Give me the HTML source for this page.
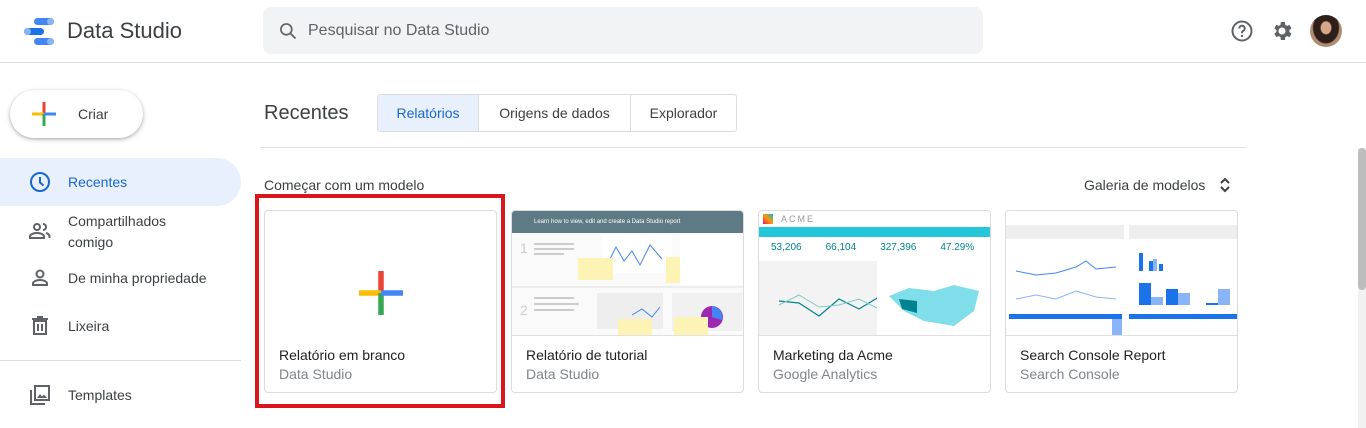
<!DOCTYPE html>
<html><head><meta charset="utf-8"><style>
*{box-sizing:border-box;margin:0;padding:0}
body{width:1366px;height:428px;overflow:hidden;background:#fff;font-family:"Liberation Sans",sans-serif;color:#3c4043;position:relative}
.abs{position:absolute}
.card{position:absolute;top:210px;width:233px;height:183px;border:1px solid #dadce0;border-radius:4px;overflow:hidden;background:#fff}
.card .th{height:125px;border-bottom:1px solid #e0e0e0;position:relative;overflow:hidden}
.card .t{position:absolute;left:14px;top:136px;font-size:14px;color:#202124}
.card .s{position:absolute;left:14px;top:155px;font-size:14px;color:#80868b}
.nav{position:absolute;left:0;width:241px;height:48px;font-size:14px;color:#3c4043}
.nav span{position:absolute;left:68px}
.nav svg{position:absolute;left:28px}
</style></head><body>
<svg class="abs" style="left:24px;top:18px" width="30" height="28" viewBox="0 0 30 28">
<rect x="10" y="0" width="20" height="7" rx="3.5" fill="#4285f4"/>
<rect x="0" y="10" width="20" height="7" rx="3.5" fill="#1a73e8"/>
<rect x="10" y="20" width="20" height="7" rx="3.5" fill="#4285f4"/>
<circle cx="26.5" cy="3.5" r="3.5" fill="#8ab4f8"/><circle cx="3.5" cy="13.5" r="3.5" fill="#8ab4f8"/><circle cx="26.5" cy="23.5" r="3.5" fill="#8ab4f8"/>
</svg>
<div class="abs" style="left:67px;top:18px;font-size:22px;color:#3c4043">Data Studio</div>
<div class="abs" style="left:263px;top:7px;width:720px;height:47px;background:#f1f3f4;border-radius:8px"></div>
<svg class="abs" style="left:278px;top:21px" width="20" height="20" viewBox="0 0 24 24"><circle cx="10" cy="10" r="6.5" fill="none" stroke="#5f6368" stroke-width="2"/><path d="M15 15l6 6" stroke="#5f6368" stroke-width="2.2"/></svg>
<div class="abs" style="left:308px;top:22px;font-size:16px;color:#5f6368">Pesquisar no Data Studio</div>
<svg class="abs" style="left:1230px;top:19px" width="24" height="24" viewBox="0 0 24 24"><circle cx="12" cy="12" r="9.5" fill="none" stroke="#5f6368" stroke-width="2"/><path d="M9.3 9.5a2.7 2.7 0 1 1 3.8 2.4c-.8.4-1.1.9-1.1 1.8v.5" fill="none" stroke="#5f6368" stroke-width="2"/><circle cx="12" cy="17" r="1.2" fill="#5f6368"/></svg>
<svg class="abs" style="left:1270px;top:19px" width="24" height="24" viewBox="0 0 24 24"><path fill="#5f6368" d="M19.4 13a7.5 7.5 0 0 0 0-2l2.1-1.6-2-3.5-2.5 1a7 7 0 0 0-1.7-1L14.9 3h-4l-.4 2.9a7 7 0 0 0-1.7 1l-2.5-1-2 3.5L6.4 11a7.5 7.5 0 0 0 0 2l-2.1 1.6 2 3.5 2.5-1a7 7 0 0 0 1.7 1l.4 2.9h4l.4-2.9a7 7 0 0 0 1.7-1l2.5 1 2-3.5zM12 15.5a3.5 3.5 0 1 1 0-7 3.5 3.5 0 0 1 0 7z"/></svg>
<div class="abs" style="left:1310px;top:15px;width:32px;height:32px;border-radius:50%;background:radial-gradient(ellipse at 50% 40%,#d8a78a 0 22%,#2e1f1a 26% 55%,#b08c74 60%)"></div>
<div class="abs" style="left:0;top:62px;width:1366px;height:1px;background:#dadce0"></div>
<div class="abs" style="left:10px;top:90px;width:133px;height:48px;border-radius:24px;background:#fff;box-shadow:0 1px 3px rgba(60,64,67,.35),0 2px 6px rgba(60,64,67,.15)"></div>
<svg class="abs" style="left:32px;top:102px" width="24" height="24" viewBox="0 0 24 24"><rect x="10.5" y="0" width="3" height="12" fill="#ea4335"/><rect x="0" y="10.5" width="12" height="3" fill="#fbbc04"/><rect x="10.5" y="12" width="3" height="12" fill="#34a853"/><rect x="12" y="10.5" width="12" height="3" fill="#4285f4"/></svg>
<div class="abs" style="left:78px;top:106px;font-size:14px;color:#3c4043">Criar</div>
<div class="nav" style="top:158px;background:#e8f0fe;border-radius:0 24px 24px 0;color:#1967d2"><svg style="top:12px" width="24" height="24" viewBox="0 0 24 24"><circle cx="12" cy="12" r="9" fill="none" stroke="#1967d2" stroke-width="2"/><path d="M12 7v5.5l3.5 3" fill="none" stroke="#1967d2" stroke-width="2"/></svg><span style="top:16px">Recentes</span></div>
<div class="nav" style="top:207px"><svg style="top:12px" width="24" height="24" viewBox="0 0 24 24"><circle cx="9" cy="8" r="3" fill="none" stroke="#5f6368" stroke-width="2"/><path d="M2 19v-1.5c0-2 3-3.5 7-3.5s7 1.5 7 3.5V19z" fill="none" stroke="#5f6368" stroke-width="2"/><path d="M15 5a3 3 0 0 1 0 6M18 14c2 .6 3.5 1.7 3.5 3.5V19" fill="none" stroke="#5f6368" stroke-width="2"/></svg><span style="top:4px;line-height:21px">Compartilhados<br>comigo</span></div>
<div class="nav" style="top:254px"><svg style="top:12px" width="24" height="24" viewBox="0 0 24 24"><circle cx="12" cy="8" r="3.5" fill="none" stroke="#5f6368" stroke-width="2"/><path d="M5 19v-1.5c0-2 3.5-3.5 7-3.5s7 1.5 7 3.5V19z" fill="none" stroke="#5f6368" stroke-width="2"/></svg><span style="top:16px">De minha propriedade</span></div>
<div class="nav" style="top:302px"><svg style="top:12px" width="24" height="24" viewBox="0 0 24 24"><path d="M6 7h12v13H6zM4 5h16M9 3h6M10 10v7M14 10v7" fill="none" stroke="#5f6368" stroke-width="2"/></svg><span style="top:16px">Lixeira</span></div>
<div class="abs" style="left:0;top:360px;width:241px;height:1px;background:#dadce0"></div>
<div class="nav" style="top:371px"><svg style="top:12px" width="24" height="24" viewBox="0 0 24 24"><path d="M7 3h14v14H7z" fill="none" stroke="#5f6368" stroke-width="2"/><path d="M3 7v14h14" fill="none" stroke="#5f6368" stroke-width="2"/><path d="M9 15l3-4 2 2.5 2-2 3 3.5z" fill="#5f6368"/></svg><span style="top:16px">Templates</span></div>
<div class="abs" style="left:264px;top:102px;font-size:20px;color:#3c4043">Recentes</div>
<div class="abs" style="left:377px;top:94px;width:360px;height:38px;border:1px solid #dadce0;border-radius:3px;display:flex;font-size:14px">
<div style="width:101px;background:#e8f0fe;color:#1967d2;border-right:1px solid #dadce0;text-align:center;line-height:36px">Relatórios</div>
<div style="width:152px;border-right:1px solid #dadce0;text-align:center;line-height:36px">Origens de dados</div>
<div style="flex:1;text-align:center;line-height:36px">Explorador</div></div>
<div class="abs" style="left:260px;top:147px;width:986px;height:1px;background:#e0e0e0"></div>
<div class="abs" style="left:264px;top:177px;font-size:14px;color:#3c4043">Começar com um modelo</div>
<div class="abs" style="left:1084px;top:177px;font-size:14px;color:#3c4043">Galeria de modelos</div>
<svg class="abs" style="left:1219px;top:177px" width="12" height="16" viewBox="0 0 12 16"><path d="M2 6l4-4 4 4M2 10l4 4 4-4" fill="none" stroke="#3c4043" stroke-width="2"/></svg>
<div class="card" style="left:264px"><div class="th" style="border-bottom:none"><svg style="position:absolute;left:94px;top:60px" width="44" height="44" viewBox="0 0 24 24"><rect x="10.5" y="0" width="3" height="12" fill="#ea4335"/><rect x="0" y="10.5" width="12" height="3" fill="#fbbc04"/><rect x="10.5" y="12" width="3" height="12" fill="#34a853"/><rect x="12" y="10.5" width="12" height="3" fill="#4285f4"/></svg></div><div class="t">Relatório em branco</div><div class="s">Data Studio</div></div>
<div class="card" style="left:511px"><div class="th" style="background:#fafafa">
<div style="position:absolute;left:0;top:0;width:233px;height:22px;background:#5e7a84;color:#fff;font-size:6px;padding:8px 0 0 22px">Learn how to view, edit and create a Data Studio report</div>
<svg style="position:absolute;left:0;top:22px" width="233" height="103"><text x="8" y="20" font-size="14" fill="#ccc">1</text><text x="8" y="82" font-size="14" fill="#ccc">2</text>
<rect x="90" y="2" width="70" height="38" fill="#fff"/><polyline points="96,30 104,14 112,28 120,18 128,32 138,12 150,26" fill="none" stroke="#4285f4"/><rect x="66" y="25" width="35" height="22" fill="#fdf3b5"/><rect x="154" y="24" width="35" height="26" fill="#fdf3b5"/><rect x="168" y="2" width="62" height="50" fill="#fff"/><line x1="0" y1="54" x2="233" y2="54" stroke="#e0e0e0"/><rect x="85" y="60" width="66" height="36" fill="#eee"/><polyline points="120,82 130,76 140,84 148,74" fill="none" stroke="#4285f4"/><rect x="160" y="60" width="70" height="38" fill="#f1f1f1"/><circle cx="200" cy="84" r="11" fill="#9c27b0"/><path d="M200 84V73a11 11 0 0 1 10 14z" fill="#4285f4"/><rect x="106" y="86" width="34" height="17" fill="#fdf3b5"/><rect x="162" y="84" width="34" height="19" fill="#fdf3b5"/>
<g fill="#ccc"><rect x="22" y="10" width="40" height="2"/><rect x="22" y="15" width="40" height="2"/><rect x="22" y="20" width="30" height="2"/><rect x="22" y="64" width="40" height="2"/><rect x="22" y="70" width="45" height="2"/><rect x="22" y="76" width="40" height="2"/></g></svg></div><div class="t">Relatório de tutorial</div><div class="s">Data Studio</div></div>
<div class="card" style="left:758px"><div class="th" style="background:#f3f3f3">
<div style="position:absolute;left:0;top:0;width:233px;height:16px;background:#fff;font-size:9px;color:#999;padding:3px 0 0 22px;letter-spacing:2px">ACME</div>
<div style="position:absolute;left:4px;top:3px;width:10px;height:10px;background:linear-gradient(45deg,#e91e63,#ff9800,#00bcd4)"></div>
<div style="position:absolute;left:0;top:16px;width:233px;height:10px;background:#26c6da"></div>
<div style="position:absolute;left:0;top:26px;width:233px;height:24px;background:#fff;font-size:10px;color:#00838f;display:flex;gap:24px;padding:5px 0 0 12px"><span>53,206</span><span>66,104</span><span>327,396</span><span>47.29%</span></div>
<svg style="position:absolute;left:0;top:50px" width="233" height="75"><polyline points="20,40 40,42 60,55 80,38 100,48 120,36 140,50 160,42 168,46" fill="none" stroke="#00838f" stroke-width="1.2"/><polyline points="20,44 40,34 60,46 80,44 100,38 120,48 140,40 168,42" fill="none" stroke="#80cbc4"/><rect x="118" y="0" width="115" height="75" fill="#fff"/><path d="M130 35l20-8 25 3 20-6 25 6-5 20-20 15-30-5-20-10z" fill="#80deea"/><path d="M140 38l18 2 0 12-15-4z" fill="#00838f"/></svg></div><div class="t">Marketing da Acme</div><div class="s">Google Analytics</div></div>
<div class="card" style="left:1005px"><div class="th" style="background:#fff">
<svg style="position:absolute;left:0;top:0" width="233" height="125"><rect x="0" y="14" width="118" height="14" fill="#eee"/><rect x="123" y="14" width="110" height="14" fill="#eee"/><polyline points="10,60 30,64 50,62 70,56 80,50 90,58 110,56" fill="none" stroke="#4285f4"/><polyline points="10,88 30,84 50,88 70,80 90,86 110,88" fill="none" stroke="#8ab4f8"/><g fill="#1a73e8"><rect x="133" y="42" width="4" height="18"/><rect x="143" y="50" width="4" height="10"/><rect x="153" y="53" width="4" height="7"/><rect x="133" y="72" width="12" height="22"/><rect x="160" y="78" width="12" height="16"/><rect x="200" y="92" width="12" height="2"/></g><g fill="#8ab4f8"><rect x="147" y="48" width="4" height="12"/><rect x="145" y="86" width="12" height="8"/><rect x="172" y="82" width="12" height="12"/><rect x="212" y="78" width="12" height="16"/></g><rect x="3" y="103" width="113" height="5" fill="#1a73e8"/><rect x="123" y="103" width="110" height="5" fill="#1a73e8"/><rect x="106" y="108" width="10" height="17" fill="#8ab4f8"/></svg></div><div class="t">Search Console Report</div><div class="s">Search Console</div></div>
<div class="abs" style="left:255px;top:194px;width:250px;height:214px;border:4px solid #d9161c"></div>
<div class="abs" style="left:1358px;top:148px;width:8px;height:280px;background:#f1f1f1"></div>
<div class="abs" style="left:1358px;top:148px;width:8px;height:142px;background:#bdbdbd;border-radius:4px"></div>
</body></html>
